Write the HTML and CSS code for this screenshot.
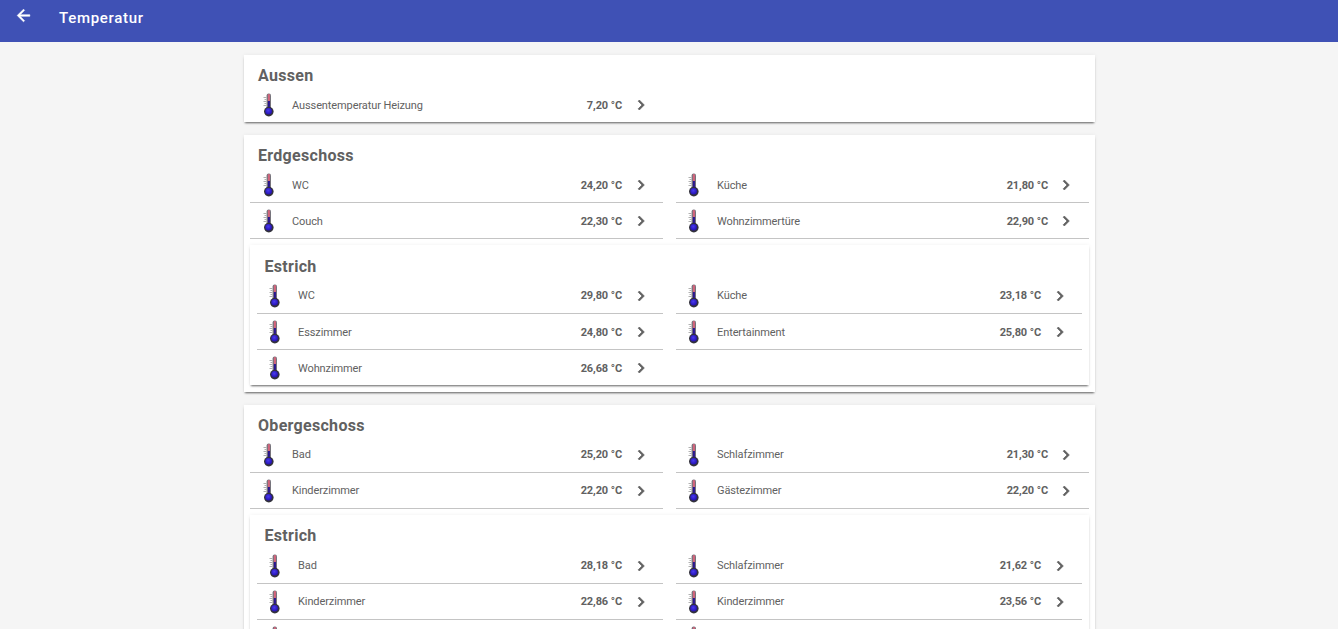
FILE: index.html
```html
<!DOCTYPE html>
<html lang="de">
<head>
  <meta charset="UTF-8" />
  <meta name="viewport" content="width=device-width, initial-scale=1.0" />
  <title>Temperatur</title>
  <link rel="stylesheet" href="styles.css">
</head>
<body>
  <svg class="defs" width="0" height="0">
    <defs>
      <radialGradient id="bulbFill" cx="0.45" cy="0.4" r="0.6">
        <stop offset="0" stop-color="#4a3cf0" />
        <stop offset="1" stop-color="#2410b0" />
      </radialGradient>
      <symbol id="thermo" viewBox="0 0 14 24">
        <rect x="5.6" y="0.5" width="4.4" height="16" rx="2" fill="#77747c" />
        <rect x="6.9" y="1.2" width="2" height="6.8" fill="#d4647c" />
        <rect x="6.9" y="8" width="2" height="9" fill="#2a1590" />
        <path d="M2.5 4.5h3M3.5 6.5h2M2.5 8.5h3M3.5 10.5h2M2.5 12.5h3" stroke="#b0b0b0" stroke-width="1.1" />
        <circle cx="7.8" cy="18.6" r="4.8" fill="#33323c" />
        <circle cx="7.6" cy="18.2" r="3.3" fill="url(#bulbFill)" />
      </symbol>
      <symbol id="chevron" viewBox="0 0 24 24">
        <path d="M10 6L8.59 7.41 13.17 12l-4.58 4.59L10 18l6-6z" />
      </symbol>
    </defs>
  </svg>

  <div class="app">
    <header class="toolbar">
      <svg class="back-icon" viewBox="0 0 24 24"><path d="M20 11H7.83l5.59-5.59L12 4l-8 8 8 8 1.41-1.41L7.83 13H20v-2z" /></svg>
      <h1>Temperatur</h1>
    </header>

    <main class="content">
      <section class="card">
        <h2>Aussen</h2>
        <div class="rows">
          <div class="row last low"><svg class="thermo"><use href="#thermo" /></svg><span class="name">Aussentemperatur Heizung</span><b>7,20 °C</b><svg class="chevron"><use href="#chevron" /></svg></div>
        </div>
      </section>

      <section class="card">
        <h2>Erdgeschoss</h2>
        <div class="rows">
          <div class="row low"><svg class="thermo"><use href="#thermo" /></svg><span class="name">WC</span><b>24,20 °C</b><svg class="chevron"><use href="#chevron" /></svg></div>
          <div class="row low"><svg class="thermo"><use href="#thermo" /></svg><span class="name">Küche</span><b>21,80 °C</b><svg class="chevron"><use href="#chevron" /></svg></div>
          <div class="row low"><svg class="thermo"><use href="#thermo" /></svg><span class="name">Couch</span><b>22,30 °C</b><svg class="chevron"><use href="#chevron" /></svg></div>
          <div class="row low"><svg class="thermo"><use href="#thermo" /></svg><span class="name">Wohnzimmertüre</span><b>22,90 °C</b><svg class="chevron"><use href="#chevron" /></svg></div>
        </div>
        <section class="card inner drop">
          <h2>Estrich</h2>
          <div class="rows">
            <div class="row"><svg class="thermo"><use href="#thermo" /></svg><span class="name">WC</span><b>29,80 °C</b><svg class="chevron"><use href="#chevron" /></svg></div>
            <div class="row"><svg class="thermo"><use href="#thermo" /></svg><span class="name">Küche</span><b>23,18 °C</b><svg class="chevron"><use href="#chevron" /></svg></div>
            <div class="row low"><svg class="thermo"><use href="#thermo" /></svg><span class="name">Esszimmer</span><b>24,80 °C</b><svg class="chevron"><use href="#chevron" /></svg></div>
            <div class="row low"><svg class="thermo"><use href="#thermo" /></svg><span class="name">Entertainment</span><b>25,80 °C</b><svg class="chevron"><use href="#chevron" /></svg></div>
            <div class="row last low"><svg class="thermo"><use href="#thermo" /></svg><span class="name">Wohnzimmer</span><b>26,68 °C</b><svg class="chevron"><use href="#chevron" /></svg></div>
          </div>
        </section>
      </section>

      <section class="card">
        <h2>Obergeschoss</h2>
        <div class="rows">
          <div class="row"><svg class="thermo"><use href="#thermo" /></svg><span class="name">Bad</span><b>25,20 °C</b><svg class="chevron"><use href="#chevron" /></svg></div>
          <div class="row"><svg class="thermo"><use href="#thermo" /></svg><span class="name">Schlafzimmer</span><b>21,30 °C</b><svg class="chevron"><use href="#chevron" /></svg></div>
          <div class="row"><svg class="thermo"><use href="#thermo" /></svg><span class="name">Kinderzimmer</span><b>22,20 °C</b><svg class="chevron"><use href="#chevron" /></svg></div>
          <div class="row"><svg class="thermo"><use href="#thermo" /></svg><span class="name">Gästezimmer</span><b>22,20 °C</b><svg class="chevron"><use href="#chevron" /></svg></div>
        </div>
        <section class="card inner">
          <h2>Estrich</h2>
          <div class="rows">
            <div class="row"><svg class="thermo"><use href="#thermo" /></svg><span class="name">Bad</span><b>28,18 °C</b><svg class="chevron"><use href="#chevron" /></svg></div>
            <div class="row"><svg class="thermo"><use href="#thermo" /></svg><span class="name">Schlafzimmer</span><b>21,62 °C</b><svg class="chevron"><use href="#chevron" /></svg></div>
            <div class="row"><svg class="thermo"><use href="#thermo" /></svg><span class="name">Kinderzimmer</span><b>22,86 °C</b><svg class="chevron"><use href="#chevron" /></svg></div>
            <div class="row"><svg class="thermo"><use href="#thermo" /></svg><span class="name">Kinderzimmer</span><b>23,56 °C</b><svg class="chevron"><use href="#chevron" /></svg></div>
            <div class="row"><svg class="thermo"><use href="#thermo" /></svg></div>
            <div class="row"><svg class="thermo"><use href="#thermo" /></svg></div>
          </div>
        </section>
      </section>
    </main>
  </div>
</body>
</html>
```
FILE: styles.css
```css
* {
  box-sizing: border-box;
}

body {
  margin: 0;
  background: #f5f5f5;
  color: #616161;
  font-family: Roboto, sans-serif;
}

.defs {
  position: absolute;
}

.app {
  height: 100vh;
  overflow: hidden;
}

.toolbar {
  display: flex;
  align-items: flex-start;
  height: 42px;
  background: #3f51b5;
  color: white;
}

.toolbar h1 {
  margin: 9px 0 0 26px;
  font-size: 15px;
  line-height: 18px;
  font-weight: 500;
  letter-spacing: 0.7px;
}

.back-icon {
  width: 19px;
  height: 19px;
  margin: 6px 0 0 14px;
  fill: white;
  stroke: white;
  stroke-width: 0.7px;
}

.content {
  display: flex;
  flex-direction: column;
  gap: 13px;
  width: 851px;
  margin: 13px 0 0 244px;
}

.card {
  background: white;
  box-shadow: 0 2px 2px -1px rgba(0, 0, 0, 0.6), 0 0 4px rgba(0, 0, 0, 0.06);
}

.card h2 {
  margin: 0;
  padding: 11px 14px 0;
  height: 32px;
  font-size: 16px;
  line-height: 20px;
  font-weight: 700;
  letter-spacing: 0.3px;
}

.rows {
  display: grid;
  grid-template-columns: 1fr 1fr;
  column-gap: 13px;
  padding: 0 6px;
}

.row {
  display: flex;
  align-items: center;
  height: 36px;
  border-bottom: 1px solid #c4c4c4;
  font-size: 11px;
}

.row.last {
  height: 35px;
  border-bottom: none;
}

.thermo {
  width: 14px;
  height: 24px;
  margin-left: 11px;
  flex: none;
}

.row:nth-child(even) .thermo,
.inner .thermo {
  margin-left: 10px;
}

.name {
  flex: 1;
  margin-left: 17px;
  letter-spacing: -0.1px;
}

.row b {
  font-weight: 700;
  letter-spacing: -0.1px;
}

/* these rows sit a pixel lower in the text line */
.low .name,
.low b {
  padding-top: 2px;
}

.chevron {
  width: 20px;
  height: 20px;
  margin: 1px 12px 0 9px;
  fill: #616161;
  stroke: #616161;
  stroke-width: 0.8px;
  flex: none;
}

.card > .rows > .row:nth-child(even) .chevron {
  margin-left: 8px;
  margin-right: 13px;
}

.inner {
  margin: 6px 6px 7px;
}

.inner h2,
.card .inner h2 {
  padding: 11px 14.5px 0;
  height: 33px;
}

.card .inner.drop h2 {
  padding-top: 12px;
}

.inner .rows {
  padding: 0 7px;
}

.inner > .rows > .row:nth-child(even) .chevron {
  margin-left: 9px;
  margin-right: 12px;
}
```
